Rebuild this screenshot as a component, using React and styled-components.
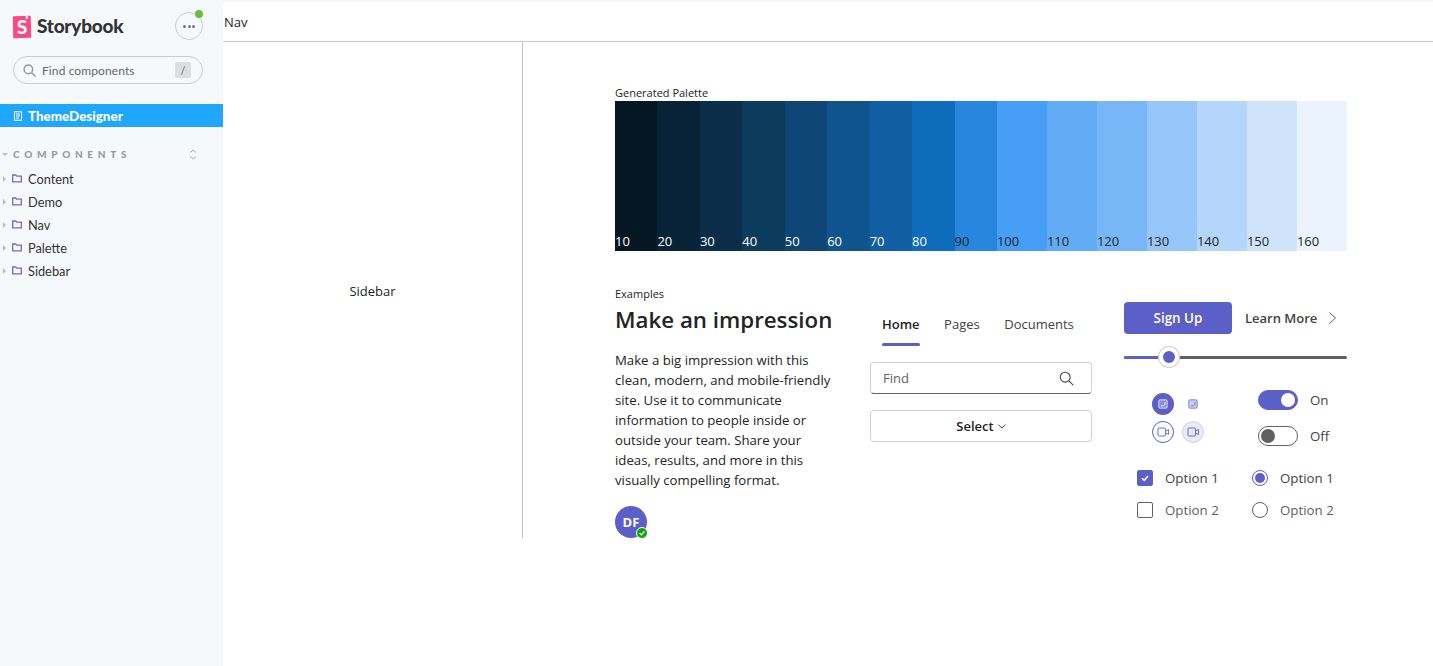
import styled, { createGlobalStyle } from "styled-components";

const GlobalStyle = createGlobalStyle`
  html, body {
    margin: 0;
    height: 100%;
    background: #f6f9fc;
  }
  * {
    box-sizing: border-box;
  }
`;

const uiFont = `"Open Sans", "Noto Sans", sans-serif`;
const sbFont = `"Lato", "Open Sans", sans-serif`;
const brand = "#5b5fc7";

const Page = styled.div`
  display: flex;
  height: 666px;
  overflow: hidden;
  font-family: ${uiFont};
`;

const SbSidebar = styled.aside`
  width: 223px;
  flex: none;
  background: #f6f9fc;
  font-family: ${sbFont};
  color: #333;
`;

const SbHeader = styled.div`
  display: flex;
  align-items: center;
  justify-content: space-between;
  height: 28px;
  margin: 12px 20px 0 13px;
`;

const Brand = styled.div`
  display: flex;
  align-items: center;
  gap: 6px;
  font-size: 19px;
  line-height: 24px;
  font-weight: 900;
  color: #333;
  letter-spacing: -0.25px;
`;

const BrandText = styled.span`
  margin-top: -1px;
`;

const LogoMark = styled.span`
  position: relative;
  width: 18px;
  height: 22px;
  margin-top: 1px;
  border-radius: 1px;
  background: #ff4785;
  color: #fff;
  font-size: 19px;
  line-height: 22px;
  text-align: center;
  transform: rotate(-1deg);

  &::after {
    content: "";
    position: absolute;
    top: 0;
    right: 3px;
    width: 2px;
    height: 3px;
    background: #f6f9fc;
  }
`;

const MenuButton = styled.div`
  position: relative;
  width: 28px;
  height: 28px;
  border: 1px solid #ccc;
  border-radius: 50%;
  display: flex;
  align-items: center;
  justify-content: center;
  gap: 1.5px;

  &::after {
    content: "";
    position: absolute;
    top: -3px;
    right: -1px;
    width: 8px;
    height: 8px;
    border-radius: 50%;
    background: #66bf3c;
  }
`;

const Dot = styled.span`
  width: 3px;
  height: 3px;
  border-radius: 50%;
  background: #777;
`;

const SearchBox = styled.div`
  display: flex;
  align-items: center;
  height: 28px;
  margin: 16px 20px 0 13px;
  padding: 0 11px 0 9px;
  border: 1px solid #ccc;
  border-radius: 14px;
  font-size: 12px;
  color: #666;
`;

const SearchLabel = styled.span`
  flex: 1;
  margin-left: 6px;
  letter-spacing: 0.1px;
`;

const Kbd = styled.span`
  width: 16px;
  height: 16px;
  background: #dcdfe2;
  border-radius: 2px;
  display: flex;
  align-items: center;
  justify-content: center;
  font-size: 11px;
  color: #666;
`;

const ActiveStory = styled.div`
  display: flex;
  align-items: center;
  height: 23px;
  margin-top: 20px;
  padding-left: 13px;
  gap: 5px;
  background: #1ea7fd;
  color: #fff;
  font-size: 13.4px;
  font-weight: 900;
`;

const SectionHead = styled.div`
  display: flex;
  align-items: center;
  height: 14px;
  margin-top: 20px;
  padding: 0 26px 0 2px;
  font-size: 10px;
  font-weight: 900;
  letter-spacing: 4.7px;
  color: #999;
`;

const SectionTitle = styled.span`
  flex: 1;
  margin-left: 5px;
`;

const TreeList = styled.div`
  display: flex;
  flex-direction: column;
  margin-top: 6px;
`;

const TreeRow = styled.div`
  display: flex;
  align-items: center;
  height: 23px;
  padding-left: 3px;
  font-size: 12.8px;
  color: #333;
`;

const Caret = styled.span`
  width: 0;
  height: 0;
  border-left: 3px solid #bbb;
  border-top: 3px solid transparent;
  border-bottom: 3px solid transparent;
  margin-right: 6px;
`;

const CaretDown = styled.span`
  width: 0;
  height: 0;
  border-top: 3px solid #bbb;
  border-left: 3px solid transparent;
  border-right: 3px solid transparent;
`;

const TreeLabel = styled.span`
  margin-left: 6px;
`;

const Main = styled.main`
  flex: 1;
  display: flex;
  flex-direction: column;
  margin-top: 2px;
  background: #fff;
  border-top-left-radius: 4px;
  font-size: 13px;
  color: #242424;
`;

const NavBar = styled.div`
  height: 40px;
  flex: none;
  padding: 12px 0 0 1px;
  border-bottom: 1px solid #c8c8c8;
  line-height: 16px;
`;

const Body = styled.div`
  display: flex;
  align-items: flex-start;
`;

const StorySidebar = styled.div`
  width: 300px;
  height: 496px;
  flex: none;
  display: flex;
  align-items: center;
  justify-content: center;
  padding-top: 2px;
  border-right: 1px solid #c8c8c8;
`;

const Content = styled.div`
  padding: 43px 0 0 92px;
  width: 825px;
`;

const Caption = styled.div`
  font-size: 11px;
  line-height: 15px;
  color: #242424;
  height: 16px;
`;

const Palette = styled.div`
  display: flex;
  height: 150px;
  width: 732.5px;
`;

const Swatch = styled.div`
  flex: none;
  width: ${(p) => p.$w}px;
  background: ${(p) => p.$bg};
  color: ${(p) => p.$fg};
  display: flex;
  align-items: flex-end;
  padding-bottom: 1px;
  font-size: 13px;
  line-height: 18px;
`;

const Examples = styled.div`
  display: flex;
  margin-top: 35px;
`;

const TextCol = styled.div`
  width: 255px;
  flex: none;
`;

const Title = styled.h2`
  margin: 3px 0 0;
  font-size: 22.3px;
  line-height: 30px;
  font-weight: 600;
  color: #242424;
`;

const Para = styled.p`
  margin: 15px 0 0;
  width: 218px;
  font-size: 13.2px;
  line-height: 20px;
  color: #242424;
`;

const Avatar = styled.div`
  position: relative;
  margin-top: 16px;
  width: 32px;
  height: 32px;
  border-radius: 50%;
  background: ${brand};
  color: #fff;
  font-size: 13px;
  font-weight: 700;
  display: flex;
  align-items: center;
  justify-content: center;
`;

const Presence = styled.span`
  position: absolute;
  right: -1px;
  bottom: -1px;
  width: 12px;
  height: 12px;
  border-radius: 50%;
  background: #13a10e;
  border: 1px solid #fff;
  display: flex;
  align-items: center;
  justify-content: center;
`;

const MiddleCol = styled.div`
  width: 222px;
  flex: none;
  margin-top: 24px;
`;

const Tabs = styled.div`
  display: flex;
  gap: 24.5px;
  padding-left: 12px;
`;

const Tab = styled.div`
  position: relative;
  height: 36px;
  padding-top: 5px;
  line-height: 18px;
  font-size: 13px;
  font-weight: ${(p) => (p.$active ? 600 : 400)};
  color: ${(p) => (p.$active ? "#242424" : "#424242")};

  ${(p) =>
    p.$active &&
    `&::after {
      content: "";
      position: absolute;
      left: 0;
      right: 0;
      bottom: 0;
      height: 3px;
      border-radius: 2px;
      background: ${brand};
    }`}
`;

const FindInput = styled.div`
  display: flex;
  align-items: center;
  justify-content: space-between;
  height: 32px;
  margin-top: 16px;
  padding: 0 17px 0 12px;
  border: 1px solid #d1d1d1;
  border-bottom-color: #616161;
  border-radius: 4px;
  font-size: 13px;
  color: #616161;
`;

const SelectButton = styled.div`
  display: flex;
  align-items: center;
  justify-content: center;
  gap: 4px;
  height: 32px;
  margin-top: 16px;
  border: 1px solid #d1d1d1;
  border-radius: 4px;
  font-size: 13px;
  font-weight: 600;
  color: #242424;
`;

const ControlsCol = styled.div`
  width: 223px;
  margin-left: 32px;
  flex: none;
  margin-top: 16px;
`;

const ButtonRow = styled.div`
  display: flex;
  align-items: center;
`;

const PrimaryButton = styled.div`
  width: 108px;
  height: 32px;
  background: ${brand};
  border-radius: 4px;
  color: #fff;
  font-size: 13.4px;
  font-weight: 600;
  display: flex;
  align-items: center;
  justify-content: center;
`;

const LinkButton = styled.div`
  display: flex;
  align-items: center;
  gap: 11px;
  margin-left: 13px;
  font-size: 13px;
  font-weight: 600;
  color: #424242;
`;

const Slider = styled.div`
  position: relative;
  height: 3px;
  margin-top: 22px;
  border-radius: 2px;
  background: #616161;
`;

const SliderFill = styled.div`
  height: 100%;
  border-radius: 2px;
  background: ${brand};
`;

const SliderThumb = styled.span`
  position: absolute;
  top: -9px;
  width: 20px;
  height: 20px;
  border-radius: 50%;
  background: ${brand};
  border: 4px solid #fff;
  box-shadow: 0 0 0 1px #d1d1d1;
`;

const Grid = styled.div`
  display: grid;
  grid-template-columns: 134px 1fr;
  margin-top: 31px;
`;

const IconGrid = styled.div`
  display: grid;
  grid-template-columns: 22px 22px;
  grid-auto-rows: 22px;
  gap: 6px 8px;
  padding: 3px 0 0 28px;
`;

const IconCircle = styled.div`
  width: 22px;
  height: 22px;
  border-radius: 50%;
  display: flex;
  align-items: center;
  justify-content: center;
  color: ${(p) => p.$fg || brand};
  background: ${(p) => p.$bg || "transparent"};
  border: ${(p) => (p.$ring ? `1px solid ${p.$ring}` : "none")};
`;

const SwitchCol = styled.div`
  display: flex;
  flex-direction: column;
  gap: 16px;
`;

const SwitchRow = styled.div`
  display: flex;
  align-items: center;
  gap: 12px;
  font-size: 13.3px;
  color: #424242;
`;

const SwitchTrack = styled.div`
  width: 40px;
  height: 20px;
  border-radius: 10px;
  display: flex;
  align-items: center;
  padding: 0 2px;
  justify-content: ${(p) => (p.$on ? "flex-end" : "flex-start")};
  background: ${(p) => (p.$on ? brand : "#fff")};
  border: 1px solid ${(p) => (p.$on ? brand : "#616161")};
`;

const SwitchKnob = styled.span`
  width: 14px;
  height: 14px;
  border-radius: 50%;
  background: ${(p) => (p.$on ? "#fff" : "#616161")};
`;

const OptionsGrid = styled.div`
  display: grid;
  grid-template-columns: 115px 1fr;
  grid-auto-rows: 32px;
  margin-top: 16px;
  padding-left: 13px;
`;

const Option = styled.div`
  display: flex;
  align-items: center;
  gap: 12px;
  font-size: 13.3px;
  color: ${(p) => (p.$checked ? "#424242" : "#616161")};
`;

const CheckBox = styled.span`
  width: 16px;
  height: 16px;
  border-radius: 2px;
  display: flex;
  align-items: center;
  justify-content: center;
  background: ${(p) => (p.$checked ? brand : "#fff")};
  border: 1px solid ${(p) => (p.$checked ? brand : "#616161")};
`;

const Radio = styled.span`
  width: 16px;
  height: 16px;
  border-radius: 50%;
  display: flex;
  align-items: center;
  justify-content: center;
  border: 1px solid ${(p) => (p.$checked ? brand : "#616161")};

  ${(p) =>
    p.$checked &&
    `&::after {
      content: "";
      width: 10px;
      height: 10px;
      border-radius: 50%;
      background: ${brand};
    }`}
`;

const swatches = [
  [10, "#061724", "#fff", 42.45],
  [20, "#082338", "#fff", 42.45],
  [30, "#0a2e4a", "#fff", 42.45],
  [40, "#0c3b5e", "#fff", 42.45],
  [50, "#0e4775", "#fff", 42.45],
  [60, "#0f548c", "#fff", 42.45],
  [70, "#115ea3", "#fff", 42.45],
  [80, "#0f6cbd", "#fff", 42.45],
  [90, "#2886de", "#242424", 42.45],
  [100, "#479ef5", "#242424", 50],
  [110, "#62abf5", "#242424", 50],
  [120, "#77b7f7", "#242424", 50],
  [130, "#96c6fa", "#242424", 50],
  [140, "#b4d6fa", "#242424", 50],
  [150, "#cfe4fa", "#242424", 50],
  [160, "#ebf3fc", "#242424", 50],
];

const SearchIcon = ({ size = 14, color = "#999", sw = 1.6 }) => (
  <svg width={size} height={size} viewBox="0 0 14 14" fill="none" stroke={color} strokeWidth={sw}>
    <circle cx="5.8" cy="5.8" r="4.6" />
    <path d="M9.2 9.2 13 13" strokeLinecap="round" />
  </svg>
);

const DocIcon = () => (
  <svg width="10" height="10" viewBox="0 0 10 10" fill="none" stroke="#fff" strokeWidth="1">
    <rect x="1.5" y=".8" width="7" height="8.4" />
    <path d="M3 3h4M3 5h4M3 7h3" />
  </svg>
);

const FolderIcon = () => (
  <svg width="10" height="9" viewBox="0 0 10 9" fill="none" stroke="#7b68b8" strokeWidth="1.3">
    <path d="M.7 1h3l1 1.2h4.6v5.6H.7z" />
  </svg>
);

const ExpandIcon = () => (
  <svg width="8" height="11" viewBox="0 0 8 11" fill="none" stroke="#aaa" strokeWidth="1">
    <path d="M1 3.5 4 1l3 2.5M1 7.5 4 10l3-2.5" />
  </svg>
);

const CalendarIcon = ({ color }) => (
  <svg width="10" height="10" viewBox="0 0 10 10" fill="none" stroke={color} strokeWidth="1">
    <rect x=".8" y=".8" width="8.4" height="8.4" rx="1.2" fill={color} fillOpacity=".3" strokeOpacity=".7" />
    <path d="M3 6.8h2.5L7 5.2V3" strokeOpacity=".8" />
  </svg>
);

const VideoIcon = () => (
  <svg width="13" height="12" viewBox="0 0 13 12" fill="none" stroke="currentColor" strokeWidth=".9">
    <rect x="1" y="2" width="7.4" height="8" rx="1" />
    <path d="M8.4 5 11.6 3.6v4.8L8.4 7" />
  </svg>
);

const ChevronRight = () => (
  <svg width="9" height="14" viewBox="0 0 9 14" fill="none" stroke="#616161" strokeWidth="1">
    <path d="M1.5 1.5 7.5 7l-6 5.5" />
  </svg>
);

const ChevronDown = () => (
  <svg width="8" height="5" viewBox="0 0 8 5" fill="none" stroke="#424242" strokeWidth="1">
    <path d="M.5.7 4 4 7.5.7" />
  </svg>
);

const Tick = ({ size = 10 }) => (
  <svg width={size} height={size} viewBox="0 0 10 10" fill="none" stroke="#fff" strokeWidth="1.6">
    <path d="M2 5.2 4.2 7.4 8 3" />
  </svg>
);

const treeItems = ["Content", "Demo", "Nav", "Palette", "Sidebar"];

export default function App() {
  return (
    <>
      <GlobalStyle />
      <Page>
        <SbSidebar>
          <SbHeader>
            <Brand>
              <LogoMark>S</LogoMark>
              <BrandText>Storybook</BrandText>
            </Brand>
            <MenuButton>
              <Dot />
              <Dot />
              <Dot />
            </MenuButton>
          </SbHeader>
          <SearchBox>
            <SearchIcon size={13} />
            <SearchLabel>Find components</SearchLabel>
            <Kbd>/</Kbd>
          </SearchBox>
          <ActiveStory>
            <DocIcon />
            ThemeDesigner
          </ActiveStory>
          <SectionHead>
            <CaretDown />
            <SectionTitle>COMPONENTS</SectionTitle>
            <ExpandIcon />
          </SectionHead>
          <TreeList>
            {treeItems.map((item) => (
              <TreeRow key={item}>
                <Caret />
                <FolderIcon />
                <TreeLabel>{item}</TreeLabel>
              </TreeRow>
            ))}
          </TreeList>
        </SbSidebar>
        <Main>
          <NavBar>Nav</NavBar>
          <Body>
            <StorySidebar>Sidebar</StorySidebar>
            <Content>
              <Caption>Generated Palette</Caption>
              <Palette>
                {swatches.map(([label, bg, fg, w]) => (
                  <Swatch key={label} $bg={bg} $fg={fg} $w={w}>
                    {label}
                  </Swatch>
                ))}
              </Palette>
              <Examples>
                <TextCol>
                  <Caption>Examples</Caption>
                  <Title>Make an impression</Title>
                  <Para>
                    Make a big impression with this clean, modern, and mobile-friendly site. Use it to
                    communicate information to people inside or outside your team. Share your ideas,
                    results, and more in this visually compelling format.
                  </Para>
                  <Avatar>
                    DF
                    <Presence>
                      <Tick size={8} />
                    </Presence>
                  </Avatar>
                </TextCol>
                <MiddleCol>
                  <Tabs>
                    <Tab $active>Home</Tab>
                    <Tab>Pages</Tab>
                    <Tab>Documents</Tab>
                  </Tabs>
                  <FindInput>
                    Find
                    <SearchIcon size={15} color="#424242" sw={1} />
                  </FindInput>
                  <SelectButton>
                    Select
                    <ChevronDown />
                  </SelectButton>
                </MiddleCol>
                <ControlsCol>
                  <ButtonRow>
                    <PrimaryButton>Sign Up</PrimaryButton>
                    <LinkButton>
                      Learn More
                      <ChevronRight />
                    </LinkButton>
                  </ButtonRow>
                  <Slider>
                    <SliderFill style={{ width: "20%" }} />
                    <SliderThumb style={{ left: "35px" }} />
                  </Slider>
                  <Grid>
                    <IconGrid>
                      <IconCircle $bg={brand}>
                        <CalendarIcon color="#fff" />
                      </IconCircle>
                      <IconCircle>
                        <CalendarIcon color={brand} />
                      </IconCircle>
                      <IconCircle $ring={brand}>
                        <VideoIcon />
                      </IconCircle>
                      <IconCircle $bg="#e8ebfa" $ring="#ccd0f5">
                        <VideoIcon />
                      </IconCircle>
                    </IconGrid>
                    <SwitchCol>
                      <SwitchRow>
                        <SwitchTrack $on>
                          <SwitchKnob $on />
                        </SwitchTrack>
                        On
                      </SwitchRow>
                      <SwitchRow>
                        <SwitchTrack>
                          <SwitchKnob />
                        </SwitchTrack>
                        Off
                      </SwitchRow>
                    </SwitchCol>
                  </Grid>
                  <OptionsGrid>
                    <Option $checked>
                      <CheckBox $checked>
                        <Tick />
                      </CheckBox>
                      Option 1
                    </Option>
                    <Option $checked>
                      <Radio $checked />
                      Option 1
                    </Option>
                    <Option>
                      <CheckBox />
                      Option 2
                    </Option>
                    <Option>
                      <Radio />
                      Option 2
                    </Option>
                  </OptionsGrid>
                </ControlsCol>
              </Examples>
            </Content>
          </Body>
        </Main>
      </Page>
    </>
  );
}
